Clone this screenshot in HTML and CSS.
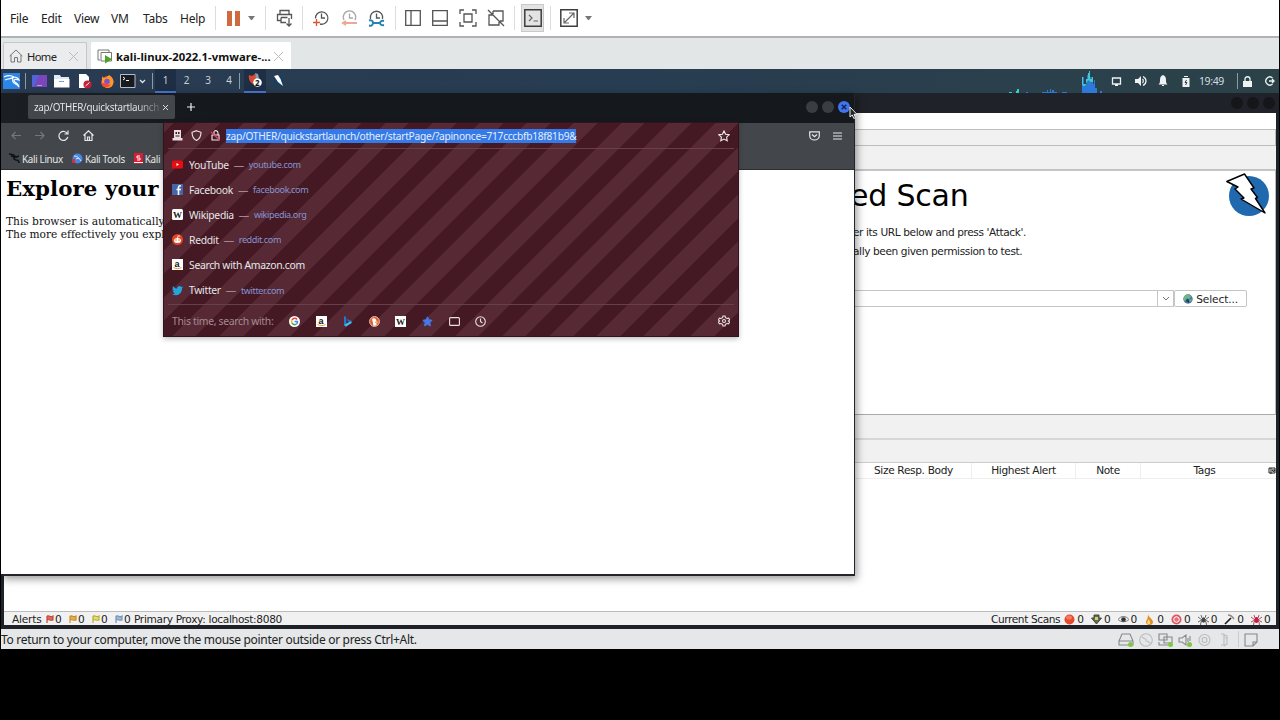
FILE: index.html
```html
<!DOCTYPE html>
<html lang="en">
<head>
<meta charset="utf-8">
<title>kali-linux-2022.1-vmware</title>
<link rel="stylesheet" href="styles.css">
</head>
<body>
<div class="host">
  <nav class="menubar">
    <span>File</span><span>Edit</span><span>View</span><span>VM</span><span>Tabs</span><span>Help</span>
    <i class="sep"></i>
    <svg width="14" height="17" viewBox="0 0 14 17"><path fill="#cf6a40" d="M0 1h5v15H0zM8 1h5v15H8z"/></svg>
    <i class="caret"></i>
    <i class="sep"></i>
    <svg class="line" width="18" height="18" viewBox="0 0 18 18"><path d="M4 5.500V1.500h9v4M5 11.500H1.500v-6h14v4.500M5 8.500h6.500M5 8.500v5h5M13 9v8M10.500 14.500 13 17l2.500-2.500"/></svg>
    <i class="sep"></i>
    <svg class="line" width="16" height="18" viewBox="0 0 16 18"><path d="M2.500 9.500A6.200 6.200 0 1 1 7 15M8.500 4.500V9H12"/><path class="orange" d="M0 13.500h7M3.500 10v7"/></svg>
    <svg class="line faded" width="17" height="18" viewBox="0 0 17 18"><path d="M3 11a6.200 6.200 0 1 1 11 0M8.500 4.500V9H12"/><path class="orange thick" d="M2 14h14M5 12l-3 2 3 2"/></svg>
    <svg class="line" width="17" height="18" viewBox="0 0 17 18"><path d="M2.500 10a6.200 6.200 0 1 1 12 0M8.500 4.500V9H12"/><path class="blue" d="M5 14h7M1 11.500c2-.7 4 .3 4 2.500s-2 3-4 2.500M16 12c-2-.6-4 .4-4 2s2 2.500 4 2"/></svg>
    <i class="sep"></i>
    <svg class="line" width="16" height="18" viewBox="0 0 16 18"><path d="M.7 1.700h14.600v14.600H.7zM6 2v14"/></svg>
    <svg class="line" width="16" height="18" viewBox="0 0 16 18"><path d="M.7 1.700h14.600v14.600H.7zM1 12h14"/></svg>
    <svg class="line" width="18" height="18" viewBox="0 0 18 18"><path d="M1 5V1h4M13 1h4v4M17 13v4h-4M5 17H1v-4M5 5h8v8H5z"/></svg>
    <svg class="line" width="18" height="18" viewBox="0 0 18 18"><path d="M6 2h10v10h-3M6 6H2v10h10v-3M6 2v3M1 1l16 16"/></svg>
    <i class="sep"></i>
    <span class="pressed"><svg class="line dark" width="18" height="18" viewBox="0 0 18 18"><path d="M.8.8h16.400v16.400H.8z"/><path class="thin" d="M5 6l3 3-3 3M9.500 12H14"/></svg></span>
    <i class="sep"></i>
    <svg class="line dark" width="18" height="18" viewBox="0 0 18 18"><path d="M.8.8h16.400v16.400H.8z"/><path class="thin" d="M4 14 14 4M9 4h5v5M4 9v5h5"/></svg>
    <i class="caret"></i>
  </nav>

  <div class="vmtabs">
    <div class="vmtab home">
      <svg width="14" height="14" viewBox="0 0 14 14"><path d="M.7 7 7 1l6.300 6M2 6v7h3.500V8.500h3V13H12V6" fill="none" stroke="#777"/></svg>
      <span>Home</span><b class="x"></b>
    </div>
    <div class="vmtab active">
      <svg width="16" height="15" viewBox="0 0 16 15"><path d="M3 11H1V1h11v2M4 3.500h10.500V12H4z" fill="none" stroke="#777"/><path d="m8 6 7 4.300L8 14.500z" fill="#4aa51f"/></svg>
      <span>kali-linux-2022.1-vmware-...</span><b class="x"></b>
    </div>
  </div>

  <div class="guest">
    <div class="panel">
      <div class="pl">
        <svg width="18" height="18" viewBox="0 0 18 18"><path fill="#2c86e8" d="M0 1h17v16H0z"/><path d="M1 5c4-2 7-2 10 0M2 8c4-2 7-1 9-3 3 0 4 1 5 3-3-1-5-1-5 1 1 2 4 1 5 6-1-3-5-3-6-5-1-3 1-4-1-5" fill="none" stroke="#fff" stroke-width="1.200"/></svg>
        <i class="psep"></i>
        <svg width="15" height="13" viewBox="0 0 15 13"><path fill="#5263d8" d="M0 0h15v12H0z"/><path fill="#7b45bd" d="M7 0h8v12H2z"/><path fill="#aab" d="M5 10h5v1H5z"/></svg>
        <svg width="16" height="14" viewBox="0 0 16 14"><path fill="#dce8f5" d="M0 1h6l1 2h8v3H0z"/><path fill="#fff" d="M0 5h15.500v8.500H0z"/><path fill="#6b9fdf" d="M5 7h5v1H5z"/></svg>
        <svg width="14" height="16" viewBox="0 0 14 16"><path fill="#fff" d="M1 1h7l3 3v11H1z"/><circle cx="9.500" cy="11.500" r="4" fill="#c62036"/><path d="m7.500 13 4-3.500" stroke="#fff"/></svg>
        <svg width="15" height="16" viewBox="0 0 15 16"><circle cx="7.500" cy="9" r="6" fill="#f35b32"/><path fill="#ff9827" d="M2 3c1 2 2 2 4 2l3-3c4 2 6 7 3 11-4 4-9 1-10-2z"/><circle cx="7" cy="8.500" r="2.800" fill="#7455d7"/><path fill="#f04b37" d="M1 5c0 5 2 6 6 5 1 2 3 2 4 1-2 5-9 4-10-1z"/></svg>
        <svg width="16" height="14" viewBox="0 0 16 14"><path fill="#171b20" stroke="#b7bdc2" d="M.5.500h14.500v13H.5z"/><path d="m3 3 2 1.500L3 6M6 6.500h3" fill="none" stroke="#fff"/></svg>
        <svg width="7" height="5" viewBox="0 0 7 5"><path d="m1 1 2.500 2.500L6 1" fill="none" stroke="#dce2e7" stroke-width="1.300"/></svg>
        <i class="psep"></i>
        <span class="ws on">1</span><span class="ws">2</span><span class="ws">3</span><span class="ws">4</span>
        <i class="psep"></i>
        <span class="task on"><svg width="16" height="16" viewBox="0 0 16 16"><path fill="#d64b32" d="M2 3l3 1 3-2 2 4-4 6C3 11 1 7 2 3z"/><path fill="#8b9bb0" d="M8 1l3 1 1 4-3 1z"/><circle cx="10.500" cy="10.500" r="4.300" fill="#fff"/><text class="count" x="8" y="13.500">2</text></svg></span>
        <svg width="14" height="14" viewBox="0 0 14 14"><circle cx="7" cy="7" r="5" fill="#173e65"/><path fill="#fff" d="m2 2 4-1 2.500 4L11 12 6 8z"/></svg>
      </div>
      <div class="pr">
        <svg width="148" height="23" viewBox="0 0 148 23"><path fill="#34cfc1" d="M7 23v-1h3v1zM14 23v-2h1v-2h2v4z"/><path fill="#2c79da" d="M24 23v-1h2v1zM40 23v-1h5v-2h1v2h2v-3h1v3h1v-2h2v2h3v1zM60 23v-1h5v1zM80 23V7h2v7h3V5h2V2h1v5h3v7h1v-4h1v8h2v5zM98 23v-2h2v2z"/><path fill="#42c9c9" d="M80 14V7h1v7h3V9h2V3h1V1h1v8h2V7h1v5h-2l-3-2-2 4-1 2h-2z"/></svg>
        <svg width="11" height="9" viewBox="0 0 11 9"><path d="M1.500 1h8v6h-8zM4 8.500h3" fill="none" stroke="#eef2f3" stroke-width="1.300"/></svg>
        <svg width="12" height="12" viewBox="0 0 12 12"><path fill="#eef2f3" d="M0 4h3l3-3v10L3 8H0z"/><path d="M7.500 4c1 1 1 3 0 4M8 1.500c4 2 4 7 0 9" fill="none" stroke="#eef2f3" stroke-width="1.300"/></svg>
        <svg width="10" height="12" viewBox="0 0 10 12"><path fill="#eef2f3" d="M5 0c2 1 3 2 3 5 0 2 0 3 1.500 4.500h-9C2 8 2 7 2 5c0-3 1-4 3-5zM4 10h2v1H4z"/></svg>
        <svg width="8" height="11" viewBox="0 0 8 11"><path fill="#eef2f3" d="M2 0h4v1H2zM.5 2h7v9h-7z"/><path d="M4.500 4 3 6.500h2L3.500 9" fill="none" stroke="#2b4049"/></svg>
        <span>19:49</span><i class="psep"></i>
        <svg width="9" height="11" viewBox="0 0 9 11"><path fill="#eef2f3" d="M0 5h9v6H0z"/><path d="M2 5V3c0-3 5-3 5 0v2" fill="none" stroke="#eef2f3" stroke-width="1.300"/></svg>
        <svg width="10" height="10" viewBox="0 0 10 10"><path d="M7.500 2A4 4 0 1 0 7.500 8M4 5h5M7 3l2 2-2 2" fill="none" stroke="#eef2f3" stroke-width="1.300"/></svg>
      </div>
    </div>

    <section class="window zap">
      <div class="zap-title"><i></i><i></i><i></i></div>
      <div class="zap-body">
        <div class="zmenu"></div><div class="ztool"></div><div class="ztabs"></div>
        <div class="quick">
          <div class="quick-text">
            <h2>ed Scan</h2>
            <p>er its URL below and press 'Attack'.</p>
            <p>ally been given permission to test.</p>
            <div class="urlrow">
              <span class="urlfield"></span>
              <span class="drop"><svg width="8" height="6" viewBox="0 0 8 6"><path d="m1 1 3 3 3-3" fill="none" stroke="#777"/></svg></span>
              <span class="select"><svg width="10" height="10" viewBox="0 0 10 10"><circle cx="5" cy="5" r="4.700" fill="#4b789c"/><path fill="#6db981" d="M1 3c2-4 7-2 7 0L6 5 4 4 2 7C0 6 0 4 1 3zM6 6l3-1-1 3z"/><path fill="#203d64" d="m4 5 2 1v3L3 7z"/></svg>Select...</span>
            </div>
          </div>
          <svg class="bolt" width="44" height="44" viewBox="0 0 44 44"><circle cx="23" cy="23" r="20" fill="#2069ae"/><path fill="#fff" stroke="#000" stroke-width="1.400" stroke-linejoin="round" d="M.8 8.500 18.500 1 28 15l-3 1 6.500 8.500-2 1 9.500 14.500-24-14 3-1-9-9 3-2z"/></svg>
        </div>
        <div class="split"></div><div class="ztabs2"></div>
        <div class="thead"><span>Size Resp. Body</span><span>Highest Alert</span><span>Note</span><span>Tags</span><svg width="8" height="8" viewBox="0 0 8 8"><path d="M1 1h6v5H1zM3 1v6M4 3h3L5.500 5z" fill="none" stroke="#222"/></svg></div>
        <div class="tbody"></div>
        <footer class="zfoot">
          <div class="alerts"><span>Alerts</span>
            <svg class="red" width="8" height="9" viewBox="0 0 8 9"><path d="M1 1v7M1 1c3-1 3 2 6 0v4c-3 1-3-1-6 0"/></svg><b>0</b>
            <svg class="amber" width="8" height="9" viewBox="0 0 8 9"><path d="M1 1v7M1 1c3-1 3 2 6 0v4c-3 1-3-1-6 0"/></svg><b>0</b>
            <svg class="yellow" width="8" height="9" viewBox="0 0 8 9"><path d="M1 1v7M1 1c3-1 3 2 6 0v4c-3 1-3-1-6 0"/></svg><b>0</b>
            <svg class="azure" width="8" height="9" viewBox="0 0 8 9"><path d="M1 1v7M1 1c3-1 3 2 6 0v4c-3 1-3-1-6 0"/></svg><b>0</b>
            <span class="proxy">Primary Proxy: localhost:8080</span>
          </div>
          <div class="scans"><span>Current Scans</span>
            <svg width="11" height="11" viewBox="0 0 11 11"><circle cx="5.500" cy="5.500" r="5" fill="#e8482e"/><ellipse cx="5" cy="3.500" rx="3" ry="2" fill="#f37b60"/></svg><b>0</b>
            <svg width="11" height="11" viewBox="0 0 11 11"><path fill="#5e6e45" stroke="#444" d="M3 1h5v3h2.500l-5 6L.5 4H3z"/><path fill="#cdd277" d="M4 3h3v3H4z"/></svg><b>0</b>
            <svg width="11" height="11" viewBox="0 0 11 11"><path d="M0 5.500c3-4 8-4 11 0-3 3-8 3-11 0z" fill="#eee" stroke="#777"/><circle cx="5.500" cy="5.500" r="2.300" fill="#333"/></svg><b>0</b>
            <svg width="11" height="11" viewBox="0 0 11 11"><path fill="#e38c23" d="M4 0c0 3 5 5 5 8 0 4-7 4-7 0 0-2 2-2 2-8z"/><path fill="#ffe07b" d="M5 5c0 2 2 3 1 5-4 0-3-2-1-5z"/></svg><b>0</b>
            <svg width="11" height="11" viewBox="0 0 11 11"><circle cx="5.500" cy="5.500" r="5" fill="#dc5666"/><circle cx="5.500" cy="5.500" r="2.800" fill="#e8717e" stroke="#fff"/></svg><b>0</b>
            <svg width="11" height="11" viewBox="0 0 11 11"><path d="M3 1l1 3 4 4 .5 3M8 1 7 4 3 8l-.5 3M0 3l4 3h3l4-3M0 8l4-2h3l4 2" fill="none" stroke="#444" stroke-width=".8"/><ellipse cx="5.500" cy="6" rx="1.800" ry="2.800" fill="#444"/></svg><b>0</b>
            <svg width="11" height="11" viewBox="0 0 11 11"><path d="m1 10 6-6" stroke="#222" stroke-width="1.700"/><path d="M4 1c3 0 4 1 6 4" fill="none" stroke="#888" stroke-width="1.600"/></svg><b>0</b>
            <svg width="11" height="11" viewBox="0 0 11 11"><path d="M3 1l1 3 4 4 .5 3M8 1 7 4 3 8l-.5 3M0 3l4 3h3l4-3M0 8l4-2h3l4 2" fill="none" stroke="#a4253c" stroke-width=".8"/><ellipse cx="5.500" cy="6" rx="2" ry="3" fill="#c51e3c"/></svg><b>0</b>
          </div>
        </footer>
      </div>
    </section>

    <section class="window firefox">
      <div class="ff-title">
        <div class="ff-tab"><span>zap/OTHER/quickstartlaunch</span><svg width="7" height="7" viewBox="0 0 7 7"><path d="m1 1 5 5M6 1 1 6" stroke="#ddd"/></svg></div>
        <svg class="plus" width="8" height="8" viewBox="0 0 8 8"><path d="M0 4h8M4 0v8" stroke="#eee" stroke-width="1.200"/></svg>
        <div class="winbtns"><i></i><i></i><i class="close"><svg width="6" height="6" viewBox="0 0 6 6"><path d="m.7.7 4.600 4.600M5.300.7.7 5.300" stroke="#142454" stroke-width="1.500"/></svg></i></div>
      </div>
      <div class="ff-nav">
        <svg class="dim" width="10" height="9" viewBox="0 0 10 9"><path d="M10 4.500H1M4.500 1 1 4.500 4.500 8"/></svg>
        <svg class="dim" width="10" height="9" viewBox="0 0 10 9"><path d="M0 4.500h9M5.500 1 9 4.500 5.500 8"/></svg>
        <svg width="11" height="11" viewBox="0 0 11 11"><path d="M9.500 4a4.500 4.500 0 1 0 .3 3M10 .5V4H6.500"/></svg>
        <svg width="11" height="11" viewBox="0 0 11 11"><path d="M.5 5.500 5.500.8l5 4.700M2 4.500v6h7v-6M4.500 10V7h2v3"/></svg>
        <svg class="pocket" width="11" height="10" viewBox="0 0 11 10"><path d="M.7.8h9.600v3.700c0 6-9.600 6-9.600 0zM3 3.500l2.500 2.300L8 3.500"/></svg>
        <svg width="9" height="8" viewBox="0 0 9 8"><path d="M0 1h9M0 4h9M0 7h9"/></svg>
      </div>
      <div class="bookmarks">
        <svg width="11" height="11" viewBox="0 0 11 11"><path d="M0 1c3 0 5 1 7 3-3 0-3 2 0 3 2 0 3 1 3 3M2 3l5 1 3-1" fill="none" stroke="#121416" stroke-width="1.500"/></svg><span>Kali Linux</span>
        <svg width="11" height="11" viewBox="0 0 11 11"><circle cx="5.500" cy="5.500" r="5" fill="#4a85e3"/><path fill="#d62f39" d="M0 6h3v4H0z"/><path d="M2 3c4 0 5 2 7 5M4 6l3-1" fill="none" stroke="#dce8fb"/></svg><span>Kali Tools</span>
        <svg width="9" height="11" viewBox="0 0 9 11"><path fill="#d51f32" d="M0 0h9v11H0z"/><path d="M6 3H3v2h3v2H3M0 9.500h9" fill="none" stroke="#fff"/></svg><span>Kali</span>
      </div>
      <main class="page">
        <h1>Explore your</h1>
        <p>This browser is automatically<br>The more effectively you expl</p>
      </main>

      <div class="popup">
        <div class="urlbar">
          <svg width="11" height="11" viewBox="0 0 11 11"><path class="solid" fill-rule="evenodd" d="M2 0h7v8h1.500v2.500H.5V8H2zM3.500 2v2H5V2zM6 2v2h1.500V2zM3.500 5.500v1h4v-1z"/></svg>
          <svg width="11" height="11" viewBox="0 0 11 11"><path d="M5.500.7 10 2.300c0 4-1 6.500-4.500 8.200C2 8.800 1 6.300 1 2.300z"/></svg>
          <svg width="11" height="11" viewBox="0 0 11 11"><path d="M2 5h7v5H2zM4 5V2c0-2 4-2 4 1v2"/><path class="slash" d="m1 2 8.500 8"/></svg>
          <span class="url">zap/OTHER/quickstartlaunch/other/startPage/?apinonce=717cccbfb18f81b9&amp;</span>
          <svg class="star" width="12" height="12" viewBox="0 0 12 12"><path d="m6 .9 1.600 3.300 3.600.5-2.600 2.500.6 3.600L6 9.100l-3.200 1.700.6-3.600L.8 4.700l3.600-.5z"/></svg>
        </div>
        <ul class="results">
          <li><svg width="11" height="11" viewBox="0 0 11 11"><rect y="1.500" width="11" height="8" rx="1.500" fill="#e70d15"/><path fill="#fff" d="m4.500 4 2.500 1.500L4.500 7z"/></svg><span>YouTube</span><em>—</em><a>youtube.com</a></li>
          <li><svg width="11" height="11" viewBox="0 0 11 11"><path fill="#4467aa" d="M0 0h11v11H0z"/><path d="M9 2C7 1.500 6.500 2 6.500 4v7M4.500 5.500H9" fill="none" stroke="#fff" stroke-width="1.600"/></svg><span>Facebook</span><em>—</em><a>facebook.com</a></li>
          <li><svg width="11" height="11" viewBox="0 0 11 11"><rect width="11" height="11" rx="1.500" fill="#fff"/><text class="w" x="1" y="8.700">W</text></svg><span>Wikipedia</span><em>—</em><a>wikipedia.org</a></li>
          <li><svg width="11" height="11" viewBox="0 0 11 11"><circle cx="5.500" cy="5.500" r="5.500" fill="#e54420"/><ellipse cx="5.500" cy="6.500" rx="3.500" ry="2.500" fill="#fff"/><path d="M5.500 4 6 2h2" fill="none" stroke="#fff" stroke-width=".8"/><circle cx="4" cy="6" r=".7" fill="#e54420"/><circle cx="7" cy="6" r=".7" fill="#e54420"/></svg><span>Reddit</span><em>—</em><a>reddit.com</a></li>
          <li><svg width="11" height="11" viewBox="0 0 11 11"><path fill="#fff" d="M0 0h11v11H0z"/><text class="a" x="2.500" y="7.500">a</text><path d="M1.500 8.500c3 1.500 5 1.500 8 0" fill="none" stroke="#e69a22"/></svg><span>Search with Amazon.com</span></li>
          <li><svg width="11" height="11" viewBox="0 0 11 11"><path fill="#24a5df" d="M1 1c1.500 2 2.500 2.500 4 2.500C5 1 8 0 9.300 2L11 1.500 10 3.500C10 9 5 12 0 9c2 0 2.500-.5 3-1-1.500 0-2-1-2-2h1C.5 5 .3 4 .5 3.500L1.500 4C.5 3 .5 2 1 1z"/></svg><span>Twitter</span><em>—</em><a>twitter.com</a></li>
        </ul>
        <div class="oneoff">
          <span>This time, search with:</span>
          <svg width="11" height="11" viewBox="0 0 11 11"><circle cx="5.500" cy="5.500" r="5.500" fill="#fff"/><g fill="none" stroke-width="1.500"><path stroke="#e94335" d="M3 4a3 3 0 0 1 5-.6"/><path stroke="#fbbc05" d="M3 7a3 3 0 0 1 0-3"/><path stroke="#34a853" d="M7.500 8A3 3 0 0 1 3 7"/><path stroke="#4285f4" d="M5.500 5.500h3A3 3 0 0 1 7.500 8"/></g></svg>
          <svg width="11" height="11" viewBox="0 0 11 11"><path fill="#fff" d="M0 0h11v11H0z"/><text class="a" x="2.500" y="7.500">a</text><path d="M1.500 8.500c3 1.500 5 1.500 8 0" fill="none" stroke="#e69a22"/></svg>
          <svg width="11" height="11" viewBox="0 0 11 11"><path fill="#2875cf" d="m2 0 2.200 1v6.500L7.500 6 5.800 5 5 3l4.500 2v2L4 10.500 2 9z"/><path fill="#3fc0ee" d="m2 9 5.500-3 2-.5v1.500L4 10.500z"/></svg>
          <svg width="11" height="11" viewBox="0 0 11 11"><circle cx="5.500" cy="5.500" r="4.900" fill="#dd5833" stroke="#f7c4b0"/><path fill="#fff" d="M3 3c2-2 5 0 4.500 3v3L4.500 10z"/><path fill="#f4b830" d="M6 5.500h3V7H6z"/></svg>
          <svg width="11" height="11" viewBox="0 0 11 11"><path fill="#fff" d="M0 0h11v11H0z"/><text class="w" x="1" y="8.700">W</text></svg>
          <svg width="11" height="11" viewBox="0 0 11 11"><path fill="#4379ec" stroke="#4379ec" stroke-linejoin="round" d="m5.500.8 1.400 3 3.300.5-2.400 2.300.6 3.300-2.900-1.600-2.900 1.600.6-3.300L.8 4.300l3.300-.5z"/></svg>
          <svg class="o" width="11" height="11" viewBox="0 0 11 11"><rect x=".6" y="1.600" width="9.800" height="7.800" rx="1"/></svg>
          <svg class="o" width="11" height="11" viewBox="0 0 11 11"><circle cx="5.500" cy="5.500" r="4.800"/><path d="M5.500 2.500v3l2 1.500"/></svg>
          <svg class="o gear" width="12" height="12" viewBox="0 0 12 12"><path d="M5 1h2l.5 1.700L9 3.500l1.700-.4 1 1.700L10.400 6l1.200 1.200-1 1.700L9 8.500l-1.500.8L7 11H5l-.5-1.700L3 8.500l-1.600.4-1-1.700L1.600 6 .4 4.800l1-1.700L3 3.500l1.500-.8z"/><circle cx="6" cy="6" r="1.500"/></svg>
        </div>
      </div>
    </section>
    <svg class="pointer" width="9" height="14" viewBox="0 0 9 14"><path d="M1 1v10l2.300-2 1.500 3.500 1.700-.8L5 8.400h3z" fill="#20252c" stroke="#eee"/></svg>
  </div>

  <div class="status">
    <span>To return to your computer, move the mouse pointer outside or press Ctrl+Alt.</span>
    <svg width="16" height="14" viewBox="0 0 16 14"><path d="M1 8 4 1h8l3 7v4H1zM1 8h14"/><circle cx="12.500" cy="11.500" r="2.500"/></svg>
    <svg class="off" width="14" height="14" viewBox="0 0 14 14"><path d="M7 .7a6.300 6.300 0 1 1 0 12.600A6.300 6.300 0 1 1 7 .7M3 4l3 2M8 8l3 2M7 5.500v3"/></svg>
    <svg width="16" height="14" viewBox="0 0 16 14"><path d="M1 1h8v6H1zM6 4h8v6H6zM1 9v3h9"/><circle cx="12.500" cy="11.500" r="2.500"/></svg>
    <svg width="15" height="14" viewBox="0 0 15 14"><path d="M1 5h3l4-3v10L4 9H1zM10 5v4M12 3v5"/><circle cx="11.500" cy="11.500" r="2.500"/></svg>
    <svg class="off" width="13" height="14" viewBox="0 0 13 14"><circle class="ring" cx="6.500" cy="7" r="5.500"/><circle class="ring" cx="6.500" cy="7" r="2.500"/></svg>
    <svg class="off" width="9" height="14" viewBox="0 0 9 14"><path d="M1 1h3v11H1M4 2l3 1v8l-3 2M7 5H5"/></svg>
    <i class="sep"></i>
    <svg width="14" height="14" viewBox="0 0 14 14"><path d="M1 1h12v8l-4 4H1zM13 9H9v4"/></svg>
  </div>
</div>
</body>
</html>
```
FILE: styles.css
```css
* { box-sizing: border-box; }
body { margin: 0; background: #000; width: 1280px; height: 720px; overflow: hidden; }
svg { display: block; flex: none; }
i, em { font-style: normal; }
.host { width: 1279px; height: 649px; padding-left: 1px; display: flex; flex-direction: column; font-family: "Noto Sans", sans-serif; }

.menubar {
  height: 38px; background: #fff; border-bottom: 2px solid #b0b2b3; padding-left: 9px;
  display: grid; align-items: center; white-space: nowrap; font-size: 12px; color: #222; letter-spacing: -.25px;
  grid-template-columns: 31px 33px 37px 32px 37px 35px 12px 20px 18px 11px 26px 11px 28px 27px 27px 10px 27px 27px 28px 27px 7px 29px 10px 24px 10px;
}
.sep { width: 1px; height: 24px; background: #ddd; }
.caret { width: 7px; border: 3.500px solid transparent; border-top: 4px solid #777; border-bottom: 0; margin: 0 0 0 1px; }
.line path { fill: none; stroke: #555; stroke-width: 1.300; }
.line .orange { stroke: #d8552d; }
.line .thick { stroke-width: 2; }
.line .blue { stroke: #2484b5; stroke-width: 2; }
.faded { opacity: .5; }
.line.dark path { stroke: #3e3e3e; stroke-width: 1.500; }
.line.dark .thin { stroke: #666; stroke-width: 1.200; }
.pressed { width: 23px; height: 28px; background: #e3e3e3; border: 1px solid #c9c9c9; display: flex; align-items: center; justify-content: center; }

.vmtabs { height: 31px; background: #e3e6e7; display: flex; align-items: flex-end; gap: 4px; padding-left: 2px; }
.vmtab { height: 27px; display: flex; align-items: center; border: 1px solid #c5c7c8; border-bottom: 0; border-radius: 2px 2px 0 0; font-size: 11.500px; color: #222; padding-left: 5px; white-space: nowrap; }
.vmtab.home { width: 84px; background: #ebeced; }
.vmtab.home span { margin-left: 4px; width: 41px; font-size: 11.200px; letter-spacing: -.6px; }
.vmtab.active { width: 200px; background: #fff; border-color: #fff; font-weight: 700; color: #111; }
.vmtab.active span { margin-left: 3px; width: 157px; font-size: 11.300px; letter-spacing: .05px; }
.x { width: 9px; height: 9px; background: linear-gradient(45deg, transparent 46%, #bbb 46% 54%, transparent 54%), linear-gradient(-45deg, transparent 46%, #bbb 46% 54%, transparent 54%); margin-left: 1px; }

.guest { height: 560px; flex: none; position: relative; background: #14171b; overflow: hidden; }
.panel { height: 24px; background: linear-gradient(90deg, #293b52, #273d51 50%, #2c4249); display: flex; justify-content: space-between; color: #c8d0d6; font-size: 10px; }
.pl { display: grid; align-items: center; grid-template-columns: 22px 7px 22px 24px 22px 20px 19px 13px 3px 21px 21px 22px 20px 3px 30px 14px; padding-left: 2px; }
.psep { width: 1px; height: 16px; background: #8d9ba6; }
.ws { height: 24px; line-height: 23px; text-align: center; }
.on { background: #1e2e45; border-bottom: 2px solid #4676d3; }
.task { height: 24px; width: 22px; margin-left: 2px; display: flex; align-items: center; justify-content: center; }
.count { font: bold 8px "Noto Sans", sans-serif; fill: #111; }
.pr { display: grid; align-items: center; grid-template-columns: 109px 24px 23px 24px 17px 33px 11px 22px 12px; padding-right: 2px; }
.pr span { white-space: nowrap; font-size: 10.500px; letter-spacing: -.4px; color: #d5dde0; }
.pr .psep { justify-self: center; }

.window { position: absolute; display: flex; flex-direction: column; }
.zap { left: 0; top: 24px; width: 1278px; height: 536px; background: #202229; padding: 0 3px 4px; font-family: "DejaVu Sans", sans-serif; font-size: 10.600px; color: #222; }
.zap-title { height: 20px; display: flex; justify-content: flex-end; align-items: center; gap: 4px; padding-right: 1px; }
.zap-title i { width: 12px; height: 12px; border-radius: 50%; background: #15161a; }
.zap-body { flex: 1; background: #fff; display: flex; flex-direction: column; }
.zmenu { height: 16px; }
.ztool { height: 17px; background: #f1f1f1; border: 1px solid #bdbdc0; }
.ztabs { height: 25px; background: #f1f1f1; border-bottom: 2px solid #c4c4c7; }
.quick { height: 244px; border-bottom: 1px solid #aaa; border-right: 1px solid #bbb; padding-left: 846px; display: flex; }
.quick-text { width: 397px; padding-top: 4px; }
.quick h2 { margin: 0; font-weight: 400; font-size: 30px; line-height: 42px; letter-spacing: -.2px; color: #000; white-space: nowrap; }
.quick p { margin: 0; line-height: 19px; padding-left: 3px; white-space: nowrap; letter-spacing: -.4px; }
.quick p:first-of-type { padding-top: 6px; }
.quick .bolt { margin: 2px 0 0 -21px; }
.urlrow { display: flex; height: 17px; margin-top: 29px; }
.urlfield { width: 309px; border: 1px solid #c5c5c5; }
.drop { width: 16px; border: 1px solid #c5c5c5; border-left: 0; display: flex; align-items: center; justify-content: center; }
.select { width: 73px; border: 1px solid #c5c5c5; border-radius: 2px; display: flex; align-items: center; justify-content: center; gap: 3px; letter-spacing: -.1px; }
.split { height: 25px; background: #f1f1f1; border-bottom: 2px solid #d6d6d6; }
.ztabs2 { height: 23px; background: #f1f1f1; border-bottom: 1px solid #ccc; }
.thead { height: 16px; display: grid; grid-template-columns: 116px 104px 65px 127px 8px; padding-left: 852px; align-items: center; border-bottom: 1px solid #eee; text-align: center; white-space: nowrap; letter-spacing: -.35px; }
.thead span { border-right: 1px solid #eee; height: 15px; line-height: 15px; }
.thead span:nth-child(4) { border: 0; }
.tbody { flex: 1; }
.zfoot { height: 14px; background: #f1f1f1; border-top: 1px solid #bbb; display: flex; justify-content: space-between; padding: 1px 5px 0 8px; align-items: center; line-height: 13px; white-space: nowrap; }
.alerts, .scans { display: flex; align-items: center; }
.zfoot b { font-weight: 400; }
.alerts > span:first-child { width: 34px; letter-spacing: -.2px; }
.alerts b { width: 15px; padding-left: 1px; }
.alerts b:nth-last-child(2) { width: 11px; }
.alerts .proxy { letter-spacing: -.33px; }
.alerts path { stroke-width: 1.200; }
.red path { stroke: #bd4b3f; fill: #dd6a58; }
.amber path { stroke: #c98d25; fill: #e4ac55; }
.yellow path { stroke: #b8ad31; fill: #e1dc78; }
.azure path { stroke: #6f94ba; fill: #9db8d2; }
.scans span { margin-right: 4px; letter-spacing: -.4px; }
.scans b { width: 15.700px; padding-left: 2px; }
.scans b:last-child { width: 9px; }

.firefox { left: 0; top: 24px; width: 854px; height: 483px; background: #16191d; border-right: 1px solid #22252a; border-bottom: 2px solid #22252a; box-shadow: 2px 3px 8px rgba(0,0,0,.4); color: #e5e7e8; font-size: 10px; }
.ff-title { height: 30px; display: flex; align-items: center; padding: 0 4px 2px 27px; background: linear-gradient(90deg, #1b1e22, #15191e 25%, #15191e); flex: none; }
.ff-tab { width: 147px; height: 24px; background: #43464b; border-radius: 2px; display: flex; align-items: center; justify-content: space-between; padding: 0 6px 0 6px; white-space: nowrap; }
.ff-tab span { width: 127px; font-size: 9.900px; letter-spacing: -.3px; background: linear-gradient(90deg, #eee 80%, #666 98%); -webkit-background-clip: text; color: transparent; }
.plus { margin-left: 12px; }
.winbtns { display: flex; gap: 4px; margin-left: auto; }
.winbtns i { width: 12px; height: 12px; border-radius: 50%; background: #3b3d43; display: flex; align-items: center; justify-content: center; }
.winbtns .close { background: #3f76ee; }
.ff-nav { height: 25px; flex: none; background: #43474b; padding-left: 10px; display: flex; align-items: center; gap: 13.700px; }
.ff-nav path { fill: none; stroke: #e6e7e8; stroke-width: 1.200; }
.ff-nav .dim path { stroke: #74777a; }
.ff-nav .pocket { margin-left: 701px; }
.bookmarks { height: 22px; flex: none; background: #43474b; border-bottom: 1px solid #2c2f33; padding-left: 8px; display: flex; align-items: center; white-space: nowrap; }
.bookmarks span { margin: 0 9px 0 2px; font-size: 9.900px; letter-spacing: -.35px; }
.page { flex: 1; background: #fff; color: #111; font-family: "DejaVu Serif", serif; padding: 6px 5px; }
.page h1 { font-size: 21.300px; line-height: 25px; margin: 0 0 15px; color: #000; letter-spacing: .08px; }
.page p { font-size: 10.670px; line-height: 12.500px; margin: 0; white-space: nowrap; letter-spacing: -.03px; }

.popup { position: absolute; left: 162px; top: 29px; width: 576px; height: 215px; display: flex; flex-direction: column; border: 1px solid #30131b; box-shadow: 0 2px 5px rgba(0,0,0,.25);
  background: repeating-linear-gradient(-45deg, #451924 0 16.670px, #562935 16.670px 33.330px); }
.urlbar { height: 26px; margin: 0 4px; padding: 0 4px; display: flex; align-items: center; gap: 8px; border-bottom: 1px solid #66404a; }
.urlbar path { fill: none; stroke: #eee; stroke-width: 1.100; }
.urlbar .solid { fill: #e8dde0; stroke: none; }
.urlbar .slash { stroke: #e0445c; }
.url { background: #347be9; color: #e8edf8; line-height: 14px; white-space: nowrap; font-size: 10.200px; letter-spacing: -.27px; margin-left: -3px; }
.star { margin-left: auto; }
.results { list-style: none; margin: 0; padding: 3px 0 2px 8px; height: 155px; }
.results li { height: 25.100px; display: flex; align-items: center; white-space: nowrap; font-size: 10.400px; letter-spacing: -.32px; }
.results svg { margin-right: 6px; }
.results em { color: #a58790; margin: 0 5px 0 5px; }
.results a { color: #8793cf; font-size: 9.100px; letter-spacing: -.4px; }
.w { font: bold 9px "Liberation Serif", serif; fill: #222; letter-spacing: 0; }
.a { font: bold 9px "Liberation Sans", sans-serif; fill: #111; letter-spacing: 0; }
.oneoff { flex: 1; margin: 0 4px; padding: 1px 4px 0; border-top: 1px solid #66404a; display: flex; align-items: center; gap: 15.600px; color: #a68a93; font-size: 10.400px; }
.oneoff > span { white-space: nowrap; letter-spacing: -.32px; width: 101.500px; }
.o path, .o rect, .o circle { fill: none; stroke: #eadfe2; stroke-width: 1.100; }
.gear { margin-left: auto; }
.pointer { position: absolute; left: 848px; top: 37px; }

.status { height: 20px; background: #e5e7e8; color: #222; font-size: 12px; display: grid; align-items: center; white-space: nowrap; grid-template-columns: 1117px 21px 19px 20px 20px 22px 18px 6px 14px; letter-spacing: -.3px; }
.status span { padding-top: 2px; line-height: 18px; }
.status svg { margin-top: 2px; }
.status path, .status .ring { fill: none; stroke: #888; stroke-width: 1.100; }
.status circle { fill: #82c34a; }
.status .off path, .status .off .ring { stroke: #bbb; fill: none; }
.status .sep { height: 16px; background: #ccc; }
```
